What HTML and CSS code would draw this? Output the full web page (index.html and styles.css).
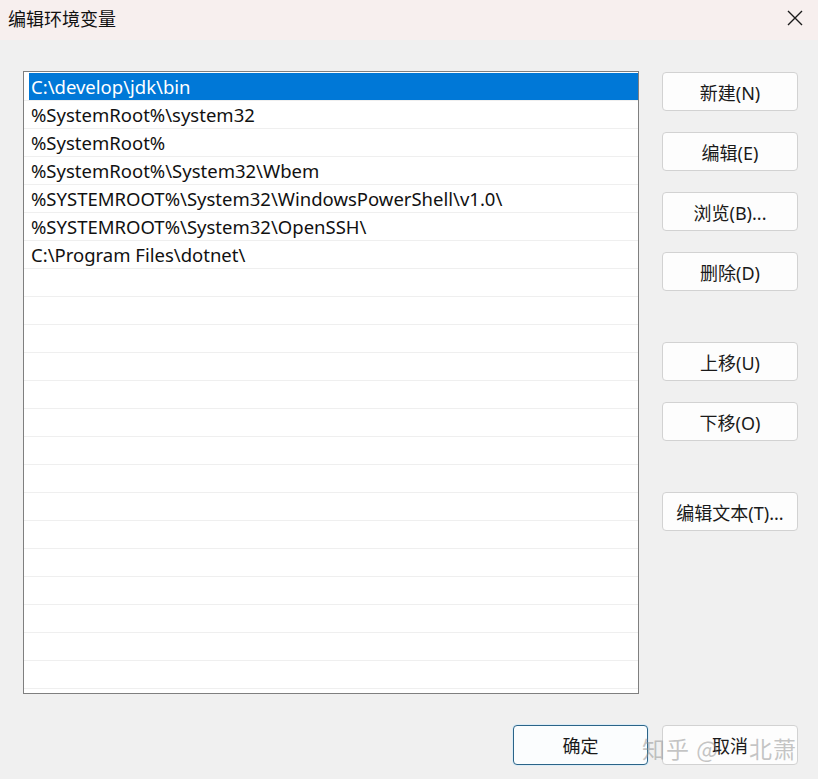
FILE: index.html
```html
<!DOCTYPE html>
<html lang="zh-CN">
<head>
<meta charset="utf-8">
<title>编辑环境变量</title>
<link rel="stylesheet" href="styles.css">
</head>
<body>
<div class="window">
  <div class="titlebar">
    <span class="title">编辑环境变量</span>
    <span class="close">
      <svg width="16" height="16" viewBox="0 0 16 16"><path d="M1 1 L15 15 M15 1 L1 15" stroke="#1a1a1a" stroke-width="1.4" fill="none"/></svg>
    </span>
  </div>
  <div class="content">
    <div class="main">
      <div class="list">
        <div class="row selected"><span class="cell">C:\develop\jdk\bin</span></div>
        <div class="row"><span class="cell">%SystemRoot%\system32</span></div>
        <div class="row"><span class="cell">%SystemRoot%</span></div>
        <div class="row"><span class="cell">%SystemRoot%\System32\Wbem</span></div>
        <div class="row"><span class="cell">%SYSTEMROOT%\System32\WindowsPowerShell\v1.0\</span></div>
        <div class="row"><span class="cell">%SYSTEMROOT%\System32\OpenSSH\</span></div>
        <div class="row"><span class="cell">C:\Program Files\dotnet\</span></div>
        <div class="row"><span class="cell"></span></div>
        <div class="row"><span class="cell"></span></div>
        <div class="row"><span class="cell"></span></div>
        <div class="row"><span class="cell"></span></div>
        <div class="row"><span class="cell"></span></div>
        <div class="row"><span class="cell"></span></div>
        <div class="row"><span class="cell"></span></div>
        <div class="row"><span class="cell"></span></div>
        <div class="row"><span class="cell"></span></div>
        <div class="row"><span class="cell"></span></div>
        <div class="row"><span class="cell"></span></div>
        <div class="row"><span class="cell"></span></div>
        <div class="row"><span class="cell"></span></div>
        <div class="row"><span class="cell"></span></div>
        <div class="row"><span class="cell"></span></div>
      </div>
      <div class="side">
        <div class="group">
          <button class="btn">新建(N)</button>
          <button class="btn">编辑(E)</button>
          <button class="btn">浏览(B)...</button>
          <button class="btn">删除(D)</button>
        </div>
        <div class="group">
          <button class="btn">上移(U)</button>
          <button class="btn">下移(O)</button>
        </div>
        <div class="group">
          <button class="btn">编辑文本(T)...</button>
        </div>
      </div>
    </div>
    <div class="footer">
      <button class="btn default">确定</button>
      <button class="btn">取消</button>
      <span class="watermark">知乎 @<span class="gap"></span>北萧</span>
    </div>
  </div>
</div>
</body>
</html>
```
FILE: styles.css
```css
* { box-sizing: border-box; }
html, body {
  margin: 0;
  padding: 0;
  width: 818px;
  height: 779px;
  overflow: hidden;
  background: #f0f0f0;
  font-family: "Noto Sans", "Noto Sans CJK SC", sans-serif;
  color: #1a1a1a;
}
.window {
  display: flex;
  flex-direction: column;
  height: 779px;
}
.titlebar {
  height: 40px;
  background: #f7efee;
  display: flex;
  align-items: center;
  justify-content: space-between;
  padding: 0 15px 4px 8px;
}
.title {
  font-size: 18px;
  font-family: "Noto Sans CJK SC", sans-serif;
  color: #111;
}
.close { display: flex; }
.content {
  flex: 1;
  padding: 31px 20px 0 23px;
  display: flex;
  flex-direction: column;
}
.main {
  display: flex;
  gap: 23px;
}
.list {
  width: 616px;
  height: 623px;
  border: 1px solid #7f7f7f;
  background: #fff;
  padding-top: 1px;
  overflow: hidden;
}
.row {
  height: 28px;
  border-bottom: 1px solid #efefef;
  display: flex;
}
.cell {
  flex: 1;
  margin-left: 5px;
  padding-left: 2px;
  font-size: 18.5px;
  line-height: 27px;
  white-space: nowrap;
  color: #111;
}
.row.selected .cell {
  background: #0078d7;
  color: #fff;
}
.side {
  display: flex;
  flex-direction: column;
  gap: 51px;
  padding-top: 1px;
}
.group {
  display: flex;
  flex-direction: column;
  gap: 21px;
}
.btn {
  width: 136px;
  height: 39px;
  border: 1px solid #d2d2d2;
  border-radius: 4px;
  background: #fdfdfd;
  font-family: "Noto Sans", "Noto Sans CJK SC", sans-serif;
  font-size: 18px;
  color: #1a1a1a;
  padding: 0;
  display: flex;
  align-items: center;
  justify-content: center;
}
.footer {
  position: relative;
  display: flex;
  justify-content: flex-end;
  gap: 14px;
  margin-top: 31px;
}
.btn.default {
  width: 135px;
  height: 40px;
  border: 1px solid #2b6488;
  box-shadow: 0 0 0 1px #dcecf6;
  background: #fbfdfe;
}
.footer .btn:last-of-type { height: 40px; }
.watermark {
  position: absolute;
  right: 1px;
  top: 6px;
  font-family: "Noto Sans CJK SC", sans-serif;
  font-size: 23px;
  letter-spacing: 1px;
  color: rgba(140, 140, 140, 0.5);
  white-space: nowrap;
  pointer-events: none;
  display: flex;
  align-items: center;
}
.watermark .gap { display: inline-block; width: 30px; }
```
